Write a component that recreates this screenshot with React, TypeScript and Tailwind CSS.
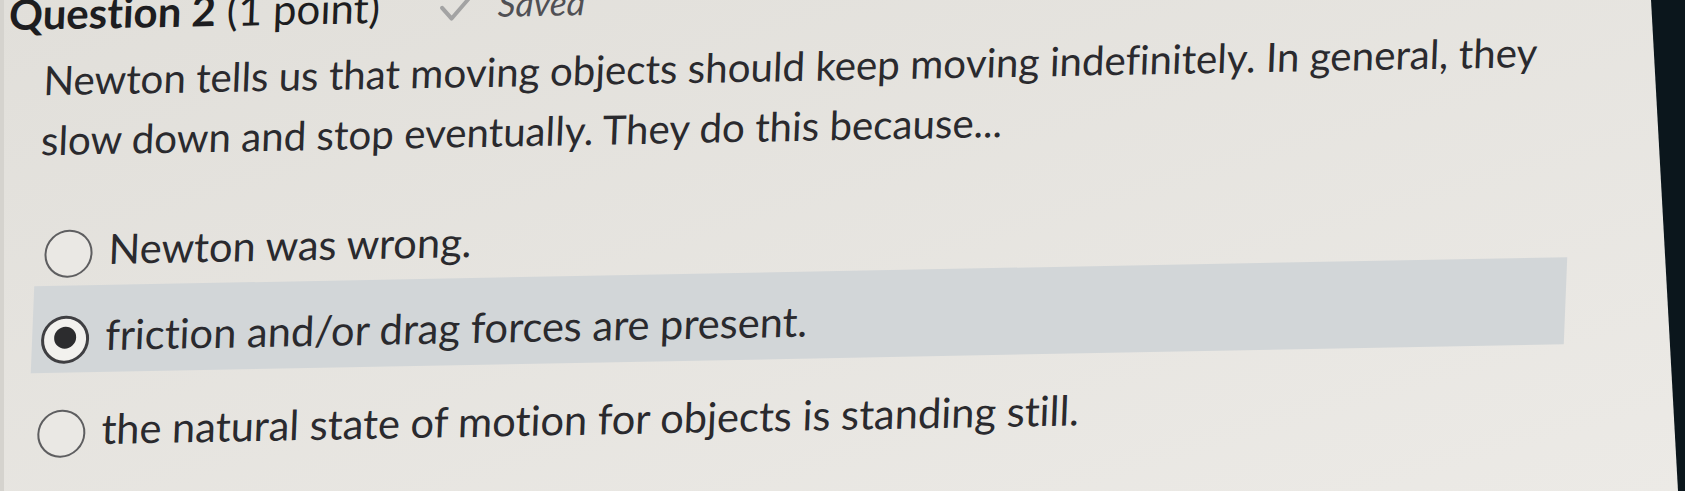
import React from 'react';

type Option = {
  label: string;
  selected?: boolean;
};

const options: Option[] = [
  { label: 'Newton was wrong.' },
  { label: 'friction and/or drag forces are present.', selected: true },
  { label: 'the natural state of motion for objects is standing still.' },
];

const Radio: React.FC<{ checked?: boolean }> = ({ checked }) => (
  <span
    className={
      checked
        ? 'mt-[6px] flex h-[48px] w-[48px] shrink-0 items-center justify-center rounded-full border-[3px] border-[#3f3f42] bg-[#f2f1ee]'
        : 'mt-[6px] flex h-[48px] w-[48px] shrink-0 items-center justify-center rounded-full border-2 border-[#5e5e60] bg-[#eae8e4]'
    }
  >
    {checked && <span className="mb-[4px] h-[22px] w-[22px] rounded-full bg-[#2c2c2e]" />}
  </span>
);

export default function App() {
  return (
    <div className="h-[491px] w-[1685px] overflow-hidden bg-[#0b161c] font-['Lato','Noto_Sans',sans-serif] [font-variant-ligatures:none]">
      <div className="flow-root h-full bg-linear-to-br from-[#e1dfda] to-[#eceae6] shadow-[inset_4px_0_0_#d5d3ce] [clip-path:polygon(0_0,1651px_0,1678px_100%,0_100%)]">
        <div className="origin-[0_250px] [transform:matrix(1,-0.019,-0.04,1,0,0)]">
          {/* header */}
          <div className="mt-[-7px] flex items-start">
            <h2 className="text-[42px] leading-none text-[#1d1d20]">
              <span className="font-bold">Question 2</span> <span>(1 point)</span>
            </h2>
            <svg
              className="ml-[60px] mt-[8px] shrink-0"
              width="34"
              height="30"
              viewBox="0 0 34 30"
              fill="none"
              stroke="#a3a3a3"
              strokeWidth="4"
              strokeLinecap="round"
              strokeLinejoin="round"
            >
              <polyline points="2,15 12,26 32,2" />
            </svg>
            <span className="ml-[24px] mt-[2px] text-[35px] italic leading-none text-[#505054]">Saved</span>
          </div>

          {/* question text */}
          <p className="mt-[16px] w-[1560px] pl-[37px] text-[40.3px] leading-[60px] text-[#2a2a2e]">
            Newton tells us that moving objects should keep moving indefinitely. In general, they slow down and stop
            eventually. They do this because...
          </p>

          {/* answers */}
          <div className="ml-[36px] mt-[30px] flex w-[1533px] flex-col">
            {options.map((o, i) => (
              <label
                key={o.label}
                className={
                  o.selected
                    ? 'flex h-[87px] items-start gap-[16px] bg-[#d2d6d8] pl-[9px] pt-[24px]'
                    : i === options.length - 1
                      ? 'flex h-[90px] items-start gap-[16px] pl-[9px] pt-[31px]'
                      : 'flex h-[86px] items-start gap-[16px] pl-[9px] pt-[24px]'
                }
              >
                <Radio checked={o.selected} />
                <span className="text-[41.6px] leading-[50px] text-[#2a2a2e]">{o.label}</span>
              </label>
            ))}
          </div>
        </div>
      </div>
    </div>
  );
}
